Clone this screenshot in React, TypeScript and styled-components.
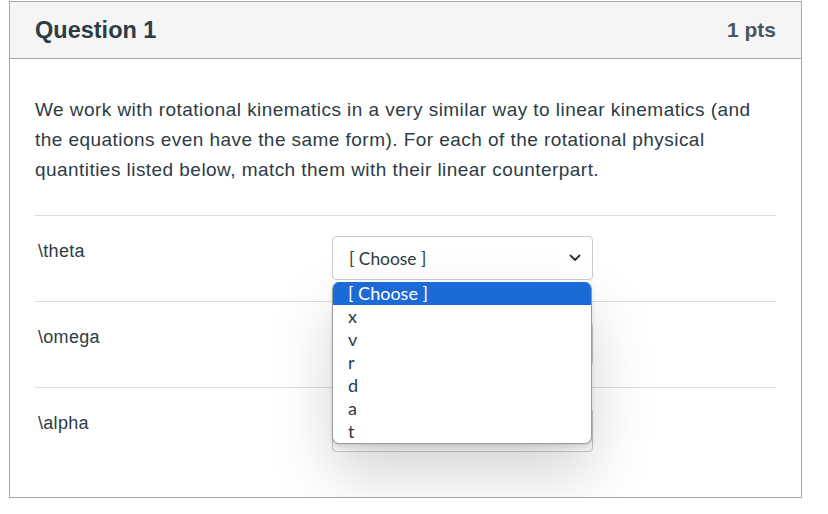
import React from "react";
import styled, { createGlobalStyle } from "styled-components";

const GlobalStyle = createGlobalStyle`
  body {
    margin: 0;
    background: #ffffff;
    font-family: "Liberation Sans", Arial, sans-serif;
    color: #2d3b45;
  }
`;

const Page = styled.div`
  padding: 1px 0 0 9px;
`;

const Card = styled.div`
  width: 791px;
  border: 1px solid #a8a8a8;
  background: #ffffff;
`;

const Header = styled.div`
  display: flex;
  justify-content: space-between;
  align-items: center;
  height: 56px;
  padding: 0 25px;
  background: #f5f5f5;
  border-bottom: 1px solid #a8a8a8;
`;

const Title = styled.h2`
  margin: 0;
  font-size: 23.5px;
  font-weight: bold;
  color: #2d3b45;
`;

const Points = styled.div`
  font-size: 21px;
  font-weight: bold;
  color: #2d3b45;
  opacity: 0.85;
`;

const Body = styled.div`
  padding: 36px 25px 24px;
`;

const Prompt = styled.p`
  margin: 0;
  font-size: 19px;
  letter-spacing: 0.45px;
  line-height: 30px;
`;

const Answers = styled.div`
  margin-top: 30px;
`;

const Row = styled.div`
  display: flex;
  align-items: flex-start;
  padding: 20px 0 21px;
  border-top: 1px solid #dcdcdc;
`;

const Label = styled.div`
  flex: 0 0 294px;
  padding: 2px 0 0 3px;
  font-size: 18px;
  letter-spacing: 0.3px;
  line-height: 26px;
`;

const SelectWrap = styled.div`
  position: relative;
  width: 261px;
`;

const SelectBox = styled.div`
  display: flex;
  align-items: center;
  justify-content: space-between;
  box-sizing: border-box;
  height: 44px;
  padding: 0 11px 0 16px;
  border: 1px solid #c7cdd1;
  border-radius: 4px;
  background: #ffffff;
  font-family: Lato, "Open Sans", sans-serif;
  font-size: 17.4px;
  color: #2d3b45;
`;

const Menu = styled.ul`
  position: absolute;
  top: 46px;
  left: 0;
  z-index: 2;
  box-sizing: border-box;
  width: 260px;
  margin: 0;
  padding: 0;
  list-style: none;
  background: #ffffff;
  border: 1px solid #9a9a9a;
  border-top: none;
  border-radius: 7px;
  overflow: hidden;
  box-shadow: 0 30px 60px rgba(0, 0, 0, 0.17), 0 2px 4px rgba(0, 0, 0, 0.12);
`;

const Option = styled.li<{ $active?: boolean }>`
  height: 23px;
  padding-left: 15px;
  font-family: Lato, "Open Sans", sans-serif;
  font-size: 18px;
  line-height: 23px;
  color: ${(p) => (p.$active ? "#ffffff" : "#2d3b45")};
  background: ${(p) => (p.$active ? "#1b6ad6" : "transparent")};
`;

const Chevron = () => (
  <svg width="12" height="8" viewBox="0 0 12 8">
    <polyline
      points="1.5,1.5 6,6 10.5,1.5"
      fill="none"
      stroke="#2d3b45"
      strokeWidth="2"
      strokeLinecap="round"
      strokeLinejoin="round"
    />
  </svg>
);

const options = ["[ Choose ]", "x", "v", "r", "d", "a", "t"];
const quantities = ["\\theta", "\\omega", "\\alpha"];

export default function App() {
  return (
    <Page>
      <GlobalStyle />
      <Card>
        <Header>
          <Title>Question 1</Title>
          <Points>1 pts</Points>
        </Header>
        <Body>
          <Prompt>
            We work with rotational kinematics in a very similar way to linear
            kinematics (and the equations even have the same form). For each of
            the rotational physical quantities listed below, match them with
            their linear counterpart.
          </Prompt>
          <Answers>
            {quantities.map((q, i) => (
              <Row key={q}>
                <Label>{q}</Label>
                <SelectWrap>
                  <SelectBox>
                    <span>[ Choose ]</span>
                    <Chevron />
                  </SelectBox>
                  {i === 0 && (
                    <Menu>
                      {options.map((o, j) => (
                        <Option key={o} $active={j === 0}>
                          {o}
                        </Option>
                      ))}
                    </Menu>
                  )}
                </SelectWrap>
              </Row>
            ))}
          </Answers>
        </Body>
      </Card>
    </Page>
  );
}
